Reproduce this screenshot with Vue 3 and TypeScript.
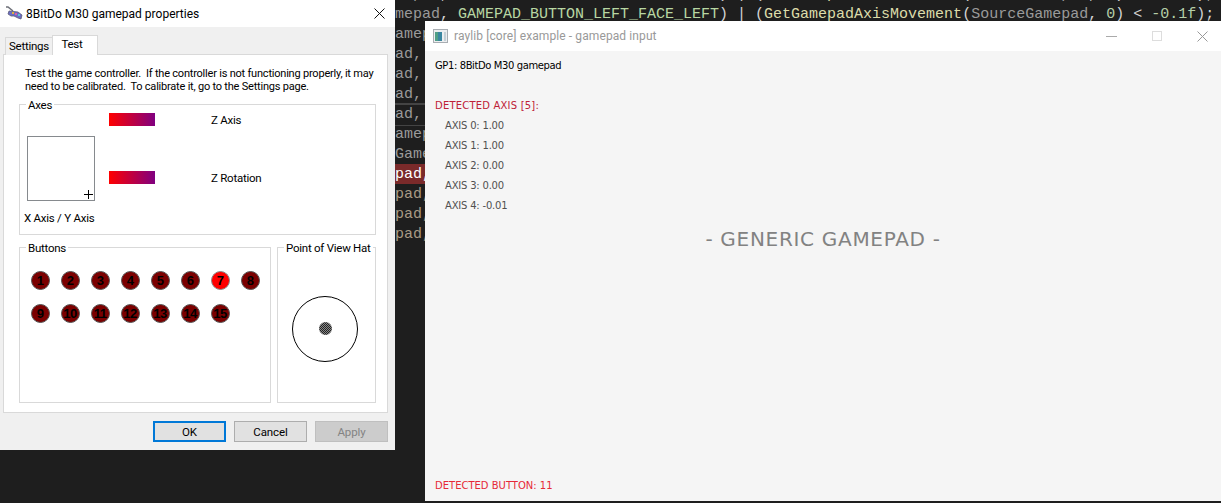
<template>
  <div class="desktop">
    <pre class="code"><span v-for="(line, i) in codeLines" :key="i" class="line" :class="line.cls"><span v-for="(part, j) in line.parts" :key="j" :class="part.cls">{{ part.text }}</span></span></pre>

    <section class="dialog">
      <header class="dialog-title">
        <svg class="pad-icon" width="18" height="16" viewBox="0 0 18 16">
          <path d="M1 1 L3 1 L8 5" stroke="#6d7078" stroke-width="1.6" fill="none" />
          <path d="M4 5 L13 6 L17 9 L16 13 L13 12 L9 10 L6 10 L3 8 Z" fill="#6a6ec4" stroke="#5a5a78" stroke-width="0.8" />
          <rect x="7" y="6" width="2" height="2" fill="#e0b040" />
          <rect x="10" y="7" width="2" height="2" fill="#d860a8" />
          <rect x="13" y="8" width="2" height="2" fill="#60c0d0" />
        </svg>
        <span class="dialog-name">8BitDo M30 gamepad properties</span>
        <svg class="dialog-close" width="11" height="11" viewBox="0 0 11 11">
          <path d="M0.5 0.5 L10.5 10.5 M10.5 0.5 L0.5 10.5" stroke="#111" stroke-width="1" fill="none" />
        </svg>
      </header>

      <div class="dialog-body">
        <div class="tabs">
          <span class="tab">Settings</span>
          <span class="tab active">Test</span>
        </div>

        <div class="panel">
          <div class="intro">
            <div v-for="t in introLines" :key="t">{{ t }}</div>
          </div>

          <fieldset class="group axes">
            <legend>Axes</legend>
            <div class="axes-left">
              <div class="xy-box"><span class="cross"></span></div>
              <span class="xy-label">X Axis / Y Axis</span>
            </div>
            <div class="axes-right">
              <div v-for="a in axes" :key="a" class="axis-row">
                <span class="bar"></span>
                <span class="axis-name">{{ a }}</span>
              </div>
            </div>
          </fieldset>

          <div class="groups-row">
            <fieldset class="group buttons">
              <legend>Buttons</legend>
              <div class="btn-grid">
                <span v-for="n in 15" :key="n" class="pad-btn" :class="{ on: n === 7 }">{{ n }}</span>
              </div>
            </fieldset>
            <fieldset class="group hat">
              <legend>Point of View Hat</legend>
              <div class="hat-ring"><span class="hat-dot"></span></div>
            </fieldset>
          </div>
        </div>

        <div class="actions">
          <button class="win-btn default">OK</button>
          <button class="win-btn">Cancel</button>
          <button class="win-btn disabled">Apply</button>
        </div>
      </div>
    </section>

    <section class="game">
      <header class="game-title">
        <svg class="game-icon" width="15" height="14" viewBox="0 0 15 14">
          <rect x="0.5" y="0.5" width="14" height="13" fill="#eceef0" stroke="#a8adb2" />
          <rect x="2" y="3" width="3" height="9" fill="#4f9f86" />
          <rect x="5" y="3" width="4" height="9" fill="#3a86a0" />
          <rect x="11" y="3" width="2" height="9" fill="#c4d0d6" />
        </svg>
        <span class="game-name">raylib [core] example - gamepad input</span>
        <div class="controls">
          <svg width="11" height="11" viewBox="0 0 11 11"><path d="M0 5.5 H11" stroke="#aaa" /></svg>
          <svg width="10" height="10" viewBox="0 0 10 10"><rect x="0.5" y="0.5" width="9" height="9" fill="none" stroke="#ddd" /></svg>
          <svg width="11" height="11" viewBox="0 0 11 11"><path d="M0.5 0.5 L10.5 10.5 M10.5 0.5 L0.5 10.5" stroke="#999" fill="none" /></svg>
        </div>
      </header>
      <div class="canvas">
        <div class="gp-name">GP1: 8BitDo M30 gamepad</div>
        <div class="detected-axis">DETECTED AXIS [5]:</div>
        <div v-for="a in axisValues" :key="a" class="axis-value">{{ a }}</div>
        <div class="generic">- GENERIC GAMEPAD -</div>
        <div class="detected-btn">DETECTED BUTTON: 11</div>
      </div>
    </section>
  </div>
</template>

<script setup lang="ts">
interface Part {
  text: string;
  cls?: string;
}

interface CodeLine {
  parts: Part[];
  cls?: string;
}

const introLines = [
  "Test the game controller.  If the controller is not functioning properly, it may",
  "need to be calibrated.  To calibrate it, go to the Settings page.",
];

const axes = ["Z Axis", "Z Rotation"];

const axisValues = [
  "AXIS 0: 1.00",
  "AXIS 1: 1.00",
  "AXIS 2: 0.00",
  "AXIS 3: 0.00",
  "AXIS 4: -0.01",
];

const plain = (text: string, cls = "dim", lineCls?: string): CodeLine => ({
  parts: [{ text, cls }],
  cls: lineCls,
});

const padLine = (button: string, sign: string): CodeLine => ({
  parts: [
    { text: "mepad", cls: "dim" },
    { text: ", " },
    { text: button, cls: "const" },
    { text: ") | (" },
    { text: "GetGamepadAxisMovement", cls: "fn" },
    { text: "(" },
    { text: "SourceGamepad", cls: "dim" },
    { text: ", " },
    { text: "0", cls: "num" },
    { text: sign },
    { text: "-0.1f", cls: "num" },
    { text: ");" },
  ],
});

const codeLines: CodeLine[] = [
  padLine("GAMEPAD_BUTTON_LEFT_FACE_DOWN", ") > "),
  padLine("GAMEPAD_BUTTON_LEFT_FACE_LEFT", ") < "),
  plain("amep"),
  plain("ad,"),
  plain("ad,"),
  plain("ad,"),
  plain("ad,", "dim", "cur"),
  plain("amep"),
  plain("Game"),
  plain("pad,", "hit-text", "hit"),
  plain("pad,", "tan"),
  plain("pad,", "tan"),
  plain("pad,", "tan"),
];
</script>

<style>
html,
body {
  margin: 0;
  background: #1e1e1e;
}
</style>

<style scoped>
.desktop {
  position: relative;
  width: 1221px;
  height: 503px;
  overflow: hidden;
  background: #1e1e1e;
}

.code {
  margin: -15px 0 0;
  padding-left: 395px;
  font: 15px/20px "Liberation Mono", monospace;
  color: #d4d4d4;
}

.line {
  display: block;
  height: 20px;
}

.line.hit {
  width: 30px;
  background: linear-gradient(#7a2a2a, #7a2a2a) 0 0 / 100% 19px no-repeat;
  box-shadow: 0 -1px 0 #7a2a2a;
}

.line.cur {
  width: 30px;
  box-shadow: 0 -1px 0 #444, 0 -2px 0 #444, 0 1px 0 #444;
}

.dim {
  color: #9a9a9a;
}

.tan {
  color: #a89a85;
}

.const {
  color: #b8d7a3;
}

.fn {
  color: #dcdcaa;
}

.num {
  color: #b5cea8;
}

.hit-text {
  color: #fff;
}

/* property sheet */
.dialog {
  position: absolute;
  left: 0;
  top: 0;
  width: 395px;
  height: 450px;
  display: flex;
  flex-direction: column;
  background: #f0f0f0;
  font: 11.5px Roboto, sans-serif;
  letter-spacing: -0.25px;
  color: #000;
}

.dialog-title {
  height: 27px;
  flex: none;
  display: flex;
  align-items: center;
  padding: 0 10px 0 5px;
  background: #fff;
}

.dialog-name {
  margin-left: 3px;
  flex: 1;
  font-size: 12px;
  letter-spacing: 0;
}

.dialog-body {
  flex: 1;
  padding: 8px 7px 0 3px;
  display: flex;
  flex-direction: column;
}

.tabs {
  display: flex;
  align-items: flex-end;
  height: 20px;
  padding-left: 2px;
  margin-bottom: -1px;
  position: relative;
  z-index: 1;
}

.tab {
  width: 48px;
  height: 18px;
  box-sizing: border-box;
  text-align: center;
  line-height: 17px;
  background: #f0f0f0;
  border: 1px solid #d9d9d9;
  border-bottom: none;
}

.tab.active {
  width: 46px;
  height: 20px;
  margin-left: -1px;
  padding-right: 6px;
  line-height: 17px;
  background: #fff;
}

.panel {
  height: 359px;
  box-sizing: border-box;
  padding: 12px 11px 0 15px;
  background: #fff;
  border: 1px solid #d9d9d9;
}

.intro {
  margin-left: 6px;
  font-size: 11px;
  letter-spacing: -0.21px;
  line-height: 13px;
  white-space: pre;
}

.group {
  margin: 0;
  padding: 0;
  border: 1px solid #d9d9d9;
  box-sizing: border-box;
  min-width: 0;
}

.group legend {
  position: relative;
  top: 1px;
  padding: 0 2px;
  margin-left: 6px;
  line-height: 14px;
}

.axes {
  margin-top: 4px;
  width: 357px;
  height: 138px;
  display: flex;
}

.axes-left {
  padding: 25px 0 0 4px;
  width: 89px;
  flex: none;
  box-sizing: border-box;
}

.xy-box {
  position: relative;
  margin-left: 3px;
  width: 68px;
  height: 65px;
  box-sizing: border-box;
  border: 1px solid #868a8e;
}

.cross {
  position: absolute;
  right: 1px;
  bottom: 1px;
  width: 9px;
  height: 9px;
  background:
    linear-gradient(#000, #000) center / 9px 1px no-repeat,
    linear-gradient(#000, #000) center / 1px 9px no-repeat;
}

.xy-label {
  display: block;
  margin-top: 10px;
  white-space: nowrap;
}

.axes-right {
  display: flex;
  flex-direction: column;
  gap: 44px;
  padding-top: 1px;
}

.axis-row {
  display: flex;
  align-items: center;
  gap: 56px;
  height: 14px;
}

.axis-name {
  padding-top: 2px;
}

.bar {
  width: 46px;
  height: 13px;
  background: linear-gradient(to right, #ff0000, #800080);
}

.groups-row {
  display: flex;
  gap: 6px;
  margin-top: 5px;
}

.buttons {
  width: 252px;
  height: 163px;
}

.hat {
  width: 99px;
  height: 163px;
}

.hat legend {
  white-space: nowrap;
}

.btn-grid {
  display: grid;
  grid-template-columns: repeat(8, 30px);
  grid-auto-rows: 33px;
  padding: 17px 0 0 8px;
}

.pad-btn {
  width: 19px;
  height: 19px;
  box-sizing: border-box;
  justify-self: center;
  border-radius: 50%;
  border: 1px solid #555;
  background: #7a0000;
  font: bold 13px/17px "Liberation Sans", sans-serif;
  text-align: center;
  letter-spacing: -0.5px;
  color: #000;
  margin-left: -6px;
}

.pad-btn.on {
  background: #ff0000;
  border-color: #8a8a8a;
}

.hat-ring {
  position: relative;
  margin: 42px 0 0 14px;
  width: 66px;
  height: 66px;
  box-sizing: border-box;
  border: 1px solid #000;
  border-radius: 50%;
}

.hat-dot {
  position: absolute;
  left: 26px;
  top: 25px;
  width: 13px;
  height: 13px;
  border-radius: 50%;
  background: repeating-conic-gradient(#222 0 25%, #888 0 50%) 0 0 / 2px 2px;
}

.actions {
  display: flex;
  justify-content: flex-end;
  gap: 8px;
  margin-top: 8px;
}

.win-btn {
  width: 73px;
  height: 21px;
  padding: 0;
  box-sizing: border-box;
  font: 11.5px Roboto, sans-serif;
  letter-spacing: -0.1px;
  color: #000;
  background: #e1e1e1;
  border: 1px solid #adadad;
}

.win-btn.default {
  border: 2px solid #0078d7;
}

.win-btn.disabled {
  color: #838383;
  background: #cccccc;
  border-color: #bfbfbf;
}

/* raylib window */
.game {
  position: absolute;
  left: 425px;
  top: 21px;
  width: 796px;
  height: 480px;
  display: flex;
  flex-direction: column;
  background: #f5f5f5;
}

.game-title {
  height: 30px;
  flex: none;
  display: flex;
  align-items: center;
  padding-left: 8px;
  background: #fff;
}

.game-name {
  margin-left: 6px;
  flex: 1;
  font: 12px Roboto, sans-serif;
  letter-spacing: 0.1px;
  color: #999;
}

.controls {
  display: flex;
  align-items: center;
  gap: 35px;
  padding-right: 13px;
}

.canvas {
  flex: 1;
  display: flex;
  flex-direction: column;
  padding: 9px 10px 9px;
  font: 10px/12px "DejaVu Sans", sans-serif;
}

.gp-name {
  color: #000;
  letter-spacing: -0.4px;
}

.detected-axis {
  margin-top: 28px;
  color: #be2137;
  letter-spacing: 0.2px;
}

.axis-value {
  margin-top: 8px;
  padding-left: 10px;
  color: #505050;
  letter-spacing: -0.2px;
}

.generic {
  margin-top: 15px;
  text-align: center;
  font-size: 20px;
  line-height: 24px;
  letter-spacing: 0.7px;
  color: #828282;
}

.detected-btn {
  margin-top: auto;
  color: #e62937;
}
</style>
